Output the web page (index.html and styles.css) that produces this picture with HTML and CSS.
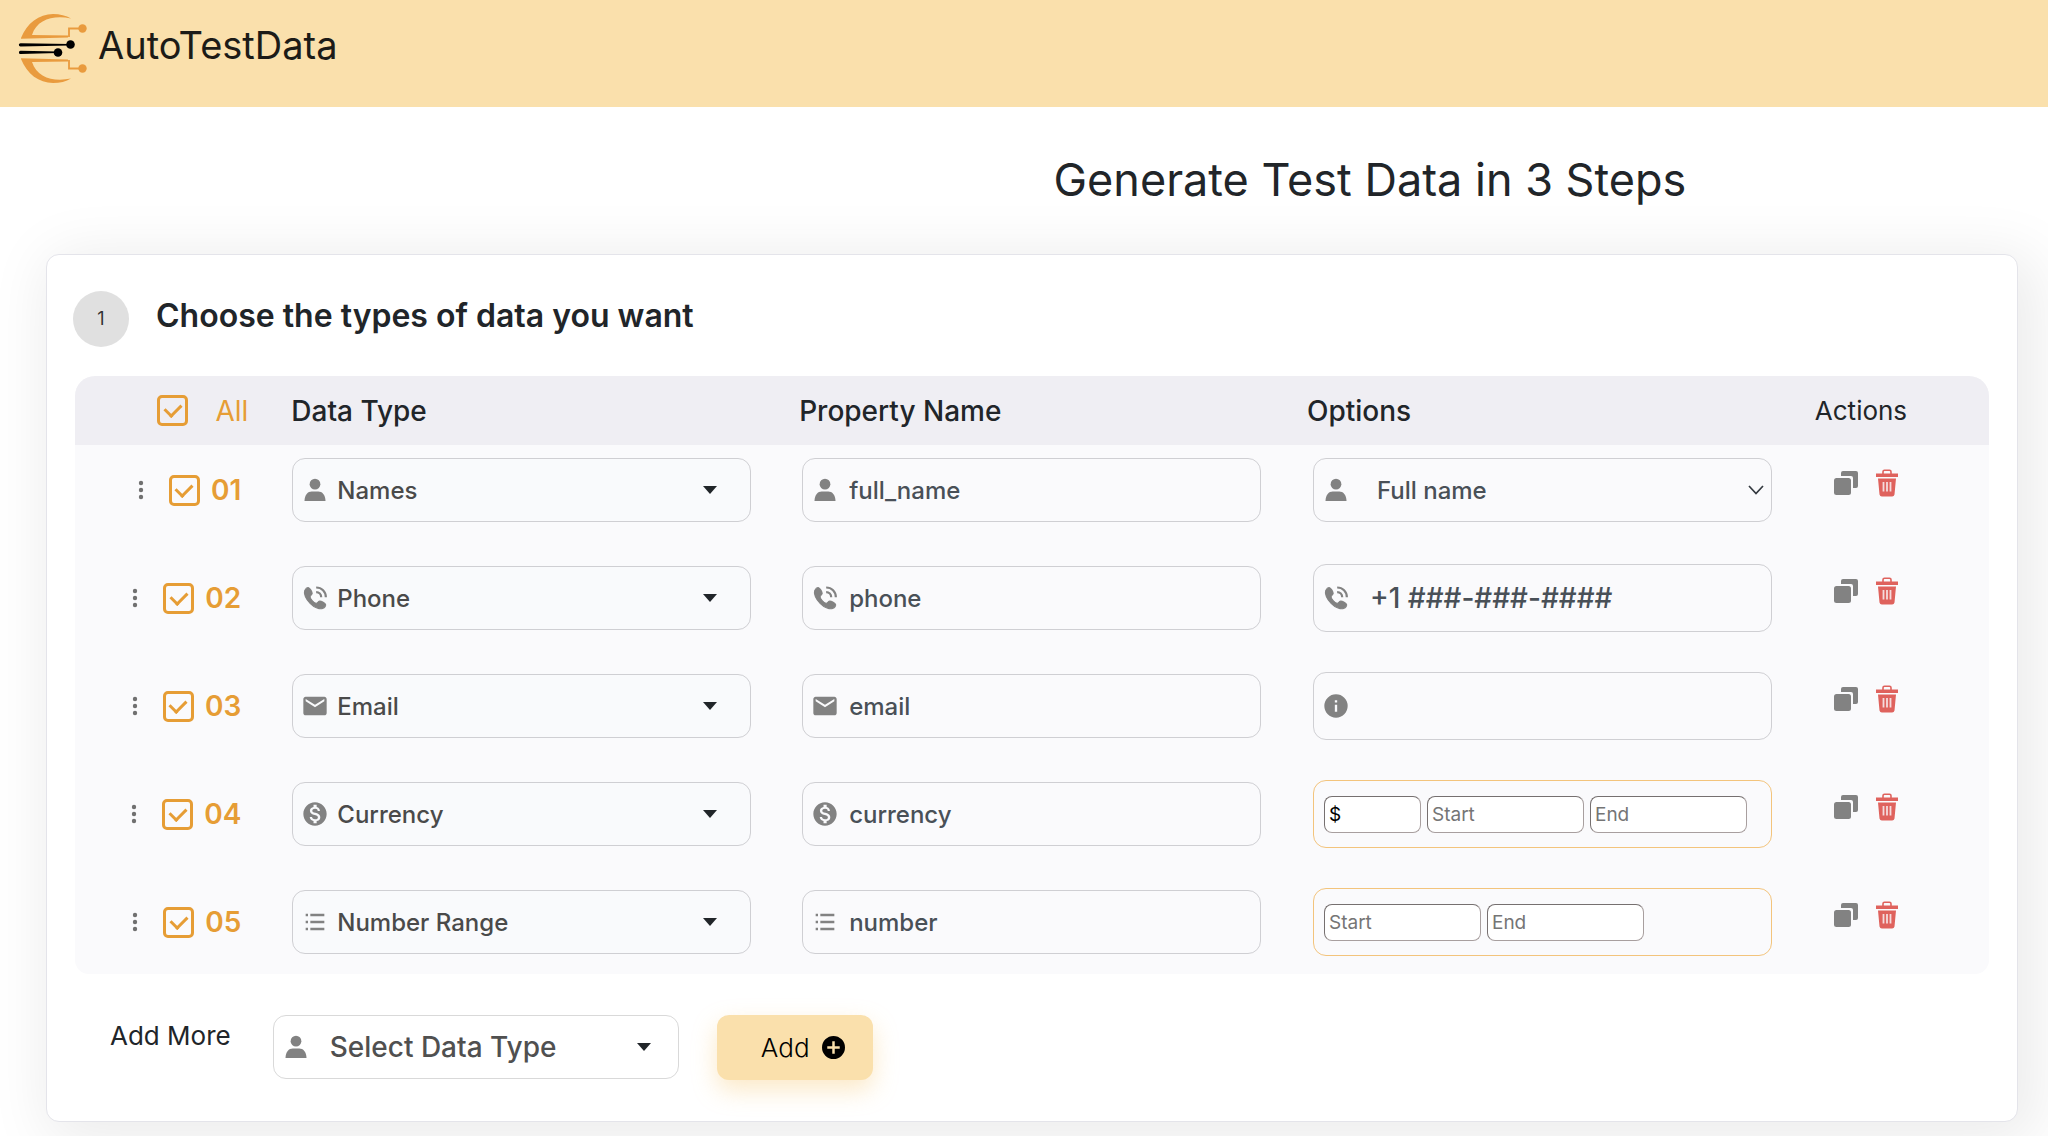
FILE: index.html
```html
<!DOCTYPE html>
<html lang="en">
<head>
    <meta charset="UTF-8">
    <meta name="viewport" content="width=device-width, initial-scale=1.0">
    <title>AutoTestData</title>
    <link rel="stylesheet" href="styles.css">
</head>
<body>
    <!-- shared icons -->
    <svg class="sprite" aria-hidden="true">
        <symbol id="person" viewBox="0 0 24 24"><ellipse cx="12" cy="7" rx="4.6" ry="4.6"/><path d="M3 21.500c0-5.500 3-8.300 6.200-8.300h5.600c3.200 0 6.200 2.800 6.200 8.300z"/></symbol>
        <symbol id="phone" viewBox="0 0 24 24">
            <path d="M3.200 5.600C4 4 5.600 2.800 6.600 3.200c1.200.5 2.900 3.400 3 4.800.1 1.200-1.900 2-1.800 3.200.2 1.700 3.300 5 5.200 5.300 1.200.2 1.900-1.900 3.100-1.900 1.500 0 4.500 1.800 5 3 .4 1-.8 2.600-2.300 3.300-2.400 1.200-7.500-.6-11-4.300C4.200 13 2 8.200 3.200 5.600z" stroke="currentColor" stroke-width="0.900"/>
            <path d="M13 3c4.700 0 8.300 3.600 8.300 8.300M13 7c2.500 0 4.300 1.800 4.300 4.300" fill="none" stroke="currentColor" stroke-width="1.900"/>
        </symbol>
        <symbol id="mail" viewBox="0 0 24 24"><path d="M20 4H4c-1.100 0-2 .9-2 2v12c0 1.100.9 2 2 2h16c1.100 0 2-.9 2-2V6c0-1.100-.9-2-2-2zm0 4l-8 5-8-5V6l8 5 8-5v2z"/></symbol>
        <symbol id="dollar" viewBox="0 0 24 24"><path d="M12 2C6.480 2 2 6.480 2 12s4.480 10 10 10 10-4.480 10-10S17.520 2 12 2zm1.410 16.090V20h-2.670v-1.930c-1.710-.36-3.160-1.460-3.270-3.400h1.960c.1 1.050.82 1.870 2.650 1.870 1.960 0 2.400-.98 2.400-1.590 0-.83-.44-1.610-2.670-2.140-2.480-.6-4.180-1.620-4.180-3.670 0-1.720 1.390-2.840 3.110-3.210V4h2.670v1.950c1.860.45 2.790 1.860 2.850 3.390H14.300c-.05-1.110-.64-1.870-2.220-1.870-1.500 0-2.400.68-2.400 1.640 0 .84.65 1.390 2.670 1.910s4.180 1.390 4.180 3.910c-.01 1.830-1.380 2.830-3.120 3.160z"/></symbol>
        <symbol id="list" viewBox="0 0 24 24"><path d="M4 5h2v2H4zM4 11h2v2H4zM4 17h2v2H4zM8 5h12v2H8zM8 11h12v2H8zM8 17h12v2H8z"/></symbol>
        <symbol id="info" viewBox="0 0 24 24"><path d="M12 2a10 10 0 1 0 0 20 10 10 0 0 0 0-20zm1 15h-2v-6h2v6zm0-8h-2V7h2v2z"/></symbol>
        <symbol id="copy" viewBox="0 0 24 24"><path d="M9 0h13a2 2 0 0 1 2 2v13a2 2 0 0 1-2 2h-3V7a2 2 0 0 0-2-2H7V2a2 2 0 0 1 2-2z"/><rect x="0" y="7" width="17" height="17" rx="2.500"/></symbol>
        <symbol id="trash" viewBox="0 0 22 28"><path d="M0 4.500h22V8H0zM2 9.500h18l-1.500 16a2.500 2.500 0 0 1-2.500 2H6a2.500 2.500 0 0 1-2.500-2z"/><path d="M7 5V2.800a1.500 1.500 0 0 1 1.500-1.500h5A1.500 1.500 0 0 1 15 2.800V5" fill="none" stroke="currentColor" stroke-width="1.600"/><path d="M7.500 13v9.500M11 13v9.500M14.500 13v9.500" stroke="#fafafc" stroke-opacity="0.800" stroke-width="1.800"/></symbol>
        <symbol id="dots" viewBox="0 0 6 20"><circle cx="3" cy="3" r="2.200"/><circle cx="3" cy="10" r="2.200"/><circle cx="3" cy="17" r="2.200"/></symbol>
        <symbol id="caret" viewBox="0 0 14 8"><path d="M0 0h14L7 8z"/></symbol>
        <symbol id="chevron" viewBox="0 0 16 10"><path d="M1 1l7 7.500L15 1" fill="none" stroke="currentColor" stroke-width="1.700"/></symbol>
        <symbol id="plus" viewBox="0 0 24 24"><path d="M12 0a12 12 0 1 0 0 24 12 12 0 0 0 0-24zm1.300 5.500v5.200h5.200v2.600h-5.200v5.200h-2.600v-5.200H5.500v-2.600h5.200V5.500z"/></symbol>
    </svg>

    <header class="navbar">
        <a class="brand" href="#">
            <svg class="logo" viewBox="0 0 70 70" aria-hidden="true">
                <g fill="#e99b3e">
                    <path d="M3 24C9 9 21 0 35 0c7 0 13 1.500 18 4.500C36 1 19 5 14 21l36 .5v2L3 24.800z"/>
                    <path d="M3 45c6 15 18 24 32 24 7 0 13-1.500 18-4.500C36 68 19 64 14 48l36-.5v-2L3 44.200z"/>
                    <circle cx="64.500" cy="14.500" r="4.200"/>
                    <circle cx="64.500" cy="54.500" r="4.200"/>
                </g>
                <path d="M51 23v-8.500h12M51 46v8.500h12" fill="none" stroke="#e99b3e" stroke-width="1.800"/>
                <path d="M2.500 29.200L52 30v1.500L2.500 32.500a1.600 1.600 0 0 1 0-3.300zM2.500 36.800L40 37.600v1.500L2.500 40a1.600 1.600 0 0 1 0-3.200z"/>
                <circle cx="52.500" cy="30.500" r="4.300"/>
                <circle cx="40" cy="38.500" r="4.300"/>
            </svg>
            <span>AutoTestData</span>
        </a>
    </header>

    <main>
        <h1 class="page-title">Generate Test Data in 3 Steps</h1>

        <section class="card">
            <div class="step">
                <span class="step-number">1</span>
                <h2>Choose the types of data you want</h2>
            </div>

            <table class="data-table">
                <thead>
                    <tr>
                        <th class="col-check"><label class="pick-all"><input type="checkbox" checked>All</label></th>
                        <th class="col-type">Data Type</th>
                        <th class="col-name">Property Name</th>
                        <th class="col-options">Options</th>
                        <th class="col-actions">Actions</th>
                    </tr>
                </thead>
                <tbody>
                    <tr>
                        <td><div class="pick"><svg class="dots"><use href="#dots"/></svg><input type="checkbox" id="row1" checked><label for="row1">01</label></div></td>
                        <td class="kind"><div class="cell"><div class="field type"><svg class="icon"><use href="#person"/></svg><select aria-label="Data type 1"><option>Names</option></select><svg class="caret"><use href="#caret"/></svg></div></div></td>
                        <td class="name"><div class="cell"><div class="field"><svg class="icon"><use href="#person"/></svg><input type="text" aria-label="Property name 1" value="full_name"></div></div></td>
                        <td class="options"><div class="cell"><div class="field pattern"><svg class="icon"><use href="#person"/></svg><select aria-label="Options 1"><option>Full name</option></select><svg class="chevron"><use href="#chevron"/></svg></div></div></td>
                        <td><div class="actions"><button aria-label="Copy"><svg class="copy"><use href="#copy"/></svg></button><button aria-label="Delete"><svg class="trash"><use href="#trash"/></svg></button></div></td>
                    </tr>
                    <tr>
                        <td><div class="pick"><svg class="dots"><use href="#dots"/></svg><input type="checkbox" id="row2" checked><label for="row2">02</label></div></td>
                        <td class="kind"><div class="cell"><div class="field type"><svg class="icon"><use href="#phone"/></svg><select aria-label="Data type 2"><option>Phone</option></select><svg class="caret"><use href="#caret"/></svg></div></div></td>
                        <td class="name"><div class="cell"><div class="field"><svg class="icon"><use href="#phone"/></svg><input type="text" aria-label="Property name 2" value="phone"></div></div></td>
                        <td class="options"><div class="cell"><div class="field pattern tall"><svg class="icon"><use href="#phone"/></svg><input type="text" aria-label="Options 2" value="+1 ###-###-####"></div></div></td>
                        <td><div class="actions"><button aria-label="Copy"><svg class="copy"><use href="#copy"/></svg></button><button aria-label="Delete"><svg class="trash"><use href="#trash"/></svg></button></div></td>
                    </tr>
                    <tr>
                        <td><div class="pick"><svg class="dots"><use href="#dots"/></svg><input type="checkbox" id="row3" checked><label for="row3">03</label></div></td>
                        <td class="kind"><div class="cell"><div class="field type"><svg class="icon"><use href="#mail"/></svg><select aria-label="Data type 3"><option>Email</option></select><svg class="caret"><use href="#caret"/></svg></div></div></td>
                        <td class="name"><div class="cell"><div class="field"><svg class="icon"><use href="#mail"/></svg><input type="text" aria-label="Property name 3" value="email"></div></div></td>
                        <td class="options"><div class="cell"><div class="field pattern tall"><svg class="icon"><use href="#info"/></svg><input type="text" aria-label="Options 3"></div></div></td>
                        <td><div class="actions"><button aria-label="Copy"><svg class="copy"><use href="#copy"/></svg></button><button aria-label="Delete"><svg class="trash"><use href="#trash"/></svg></button></div></td>
                    </tr>
                    <tr>
                        <td><div class="pick"><svg class="dots"><use href="#dots"/></svg><input type="checkbox" id="row4" checked><label for="row4">04</label></div></td>
                        <td class="kind"><div class="cell"><div class="field type"><svg class="icon"><use href="#dollar"/></svg><select aria-label="Data type 4"><option>Currency</option></select><svg class="caret"><use href="#caret"/></svg></div></div></td>
                        <td class="name"><div class="cell"><div class="field"><svg class="icon"><use href="#dollar"/></svg><input type="text" aria-label="Property name 4" value="currency"></div></div></td>
                        <td class="options"><div class="cell"><div class="field tall range"><input class="symbol" type="text" aria-label="Currency symbol" value="$"><input type="text" aria-label="Currency start" placeholder="Start"><input type="text" aria-label="Currency end" placeholder="End"></div></div></td>
                        <td><div class="actions"><button aria-label="Copy"><svg class="copy"><use href="#copy"/></svg></button><button aria-label="Delete"><svg class="trash"><use href="#trash"/></svg></button></div></td>
                    </tr>
                    <tr>
                        <td><div class="pick"><svg class="dots"><use href="#dots"/></svg><input type="checkbox" id="row5" checked><label for="row5">05</label></div></td>
                        <td class="kind"><div class="cell"><div class="field type"><svg class="icon"><use href="#list"/></svg><select aria-label="Data type 5"><option>Number Range</option></select><svg class="caret"><use href="#caret"/></svg></div></div></td>
                        <td class="name"><div class="cell"><div class="field"><svg class="icon"><use href="#list"/></svg><input type="text" aria-label="Property name 5" value="number"></div></div></td>
                        <td class="options"><div class="cell"><div class="field tall range"><input type="text" aria-label="Range start" placeholder="Start"><input type="text" aria-label="Range end" placeholder="End"></div></div></td>
                        <td><div class="actions"><button aria-label="Copy"><svg class="copy"><use href="#copy"/></svg></button><button aria-label="Delete"><svg class="trash"><use href="#trash"/></svg></button></div></td>
                    </tr>
                </tbody>
            </table>

            <div class="add-more">
                <label for="new-type">Add More</label>
                <div class="field new-type"><svg class="icon"><use href="#person"/></svg><select id="new-type"><option>Select Data Type</option></select><svg class="caret"><use href="#caret"/></svg></div>
                <button class="add">Add<svg><use href="#plus"/></svg></button>
            </div>
        </section>
    </main>
</body>
</html>
```

FILE: styles.css
```css
* {
    margin: 0;
    padding: 0;
    box-sizing: border-box;
}

body {
    font-family: "Inter", "Liberation Sans", sans-serif;
    font-size: 28px;
    color: #212529;
    background: #fff;
    overflow-x: hidden;
}

input,
select,
button {
    font: inherit;
    color: inherit;
    border: none;
    background: none;
    outline: none;
}

button,
select {
    cursor: pointer;
}

svg {
    fill: currentColor;
    flex-shrink: 0;
}

.sprite {
    display: none;
}

.navbar {
    background: #fae0ac;
    height: 107px;
    padding: 14px 18px;
}

.brand {
    display: inline-flex;
    gap: 10px;
    color: #1c1b17;
    font-size: 38px;
    line-height: 62px;
    text-decoration: none;
}

.logo {
    width: 70px;
    height: 70px;
    fill: #000;
}

.page-title {
    margin-left: 33%;
    padding: 43px 0 44px 16px;
    font-size: 45px;
    font-weight: 400;
    line-height: 60px;
    text-align: center;
}

.card {
    margin: 0 30px 14px 46px;
    padding: 36px 28px 41px 26px;
    background: #fff;
    border: 1px solid #e4e4ea;
    border-radius: 13px;
    box-shadow: 10px 10px 60px 10px rgba(0, 0, 0, 0.08);
}

.step {
    display: flex;
    gap: 27px;
    margin-bottom: 29px;
}

.step-number {
    width: 56px;
    height: 56px;
    border-radius: 50%;
    background: #e0e0e0;
    color: #333;
    font-size: 18px;
    line-height: 56px;
    text-align: center;
}

.step h2 {
    font-size: 32px;
    font-weight: 600;
    line-height: 50px;
}

.data-table {
    width: calc(100% - 2px);
    margin-left: 2px;
    table-layout: fixed;
    border-collapse: separate;
    border-spacing: 0;
    border-radius: 20px 20px 14px 14px;
    background: #fafafc;
    overflow: hidden;
}

.data-table th {
    height: 69px;
    background: #efeef3;
    font-weight: 500;
    text-align: left;
}

.data-table td {
    padding: 11px 0 29px;
    vertical-align: top;
}

.data-table tr:last-child td {
    padding-bottom: 18px;
}

.data-table .kind {
    padding-left: 1px;
}

.data-table .name {
    padding-left: 3px;
}

.data-table .options {
    padding-left: 6px;
}

.col-check {
    width: 11.3%;
}

.data-table .col-actions {
    width: 9.1%;
    font-size: 26px;
    font-weight: 400;
}

.pick,
.pick-all {
    display: flex;
    justify-content: flex-end;
    align-items: center;
    color: #e69d35;
}

.pick-all {
    gap: 27px;
    padding-right: 43px;
    font-weight: 400;
}

.pick {
    gap: 11px;
    height: 68px;
    padding-right: 50px;
    font-weight: 600;
}

.dots {
    width: 6px;
    height: 20px;
    margin-right: 14px;
    color: #707070;
}

input[type="checkbox"] {
    appearance: none;
    display: grid;
    place-items: center;
    width: 31px;
    height: 31px;
    border: 3px solid #e69d35;
    border-radius: 5px;
}

input[type="checkbox"]:checked::after {
    content: "";
    width: 13px;
    height: 8px;
    margin-bottom: 4px;
    border: solid #e69d35;
    border-width: 0 0 3px 3px;
    transform: rotate(-45deg);
}

.cell {
    display: flex;
    align-items: center;
    height: 68px;
}

.field {
    position: relative;
    display: flex;
    align-items: center;
    width: 459px;
    height: 64px;
    border: 1px solid #cfcfd3;
    border-radius: 13px;
    color: #495057;
    font-size: 24px;
    font-weight: 500;
}

.field.tall {
    height: 68px;
}

.field .icon {
    width: 28px;
    height: 28px;
    margin-left: 8px;
    color: #828282;
}

.field > input,
.field > select {
    flex: 1;
    min-width: 0;
    height: 100%;
    padding-left: 10px;
    appearance: none;
}

.type {
    background: #f9fafc;
    color: #4a4a4a;
}

.type > select {
    padding-left: 8px;
}

.caret {
    position: absolute;
    right: 33px;
    width: 14px;
    height: 8px;
    color: #212529;
    pointer-events: none;
}

.chevron {
    position: absolute;
    right: 7px;
    width: 16px;
    height: 10px;
    color: #343a40;
    pointer-events: none;
}

.pattern > select {
    padding-left: 27px;
}

.pattern > input {
    padding-left: 20px;
    font-size: 28px;
}

.range {
    gap: 6px;
    padding-left: 10px;
    border-color: #f3c47c;
}

.range > input {
    flex: none;
    width: 157px;
    height: 37px;
    padding: 0 4px;
    border: 1px solid;
    border-color: #767070 #a89f9f #a89f9f #767070;
    border-radius: 8px;
    background: #fff;
    color: #000;
    font-size: 19px;
    font-weight: 400;
}

.range > .symbol {
    width: 97px;
}

.range > input::placeholder {
    color: #757575;
}

.actions {
    display: flex;
    align-items: center;
    gap: 18px;
    height: 68px;
    padding: 0 0 14px 19px;
}

.actions button {
    display: flex;
}

.copy {
    width: 24px;
    height: 24px;
    color: #828282;
}

.trash {
    width: 22px;
    height: 28px;
    color: #df625d;
}

.add-more {
    display: flex;
    align-items: flex-start;
    padding: 41px 0 0 37px;
}

.add-more label {
    font-size: 26px;
    line-height: 42px;
}

.new-type {
    width: 406px;
    height: 64px;
    margin: 0 38px 0 42px;
    border-color: #d9d9d9;
    color: #505050;
    font-size: 28px;
}

.new-type > select {
    padding-left: 20px;
}

.new-type .caret {
    right: 27px;
}

.add {
    display: flex;
    justify-content: center;
    align-items: center;
    gap: 12px;
    width: 156px;
    height: 65px;
    padding-left: 16px;
    border-radius: 12px;
    background: #fae0ac;
    color: #000;
    font-size: 26px;
    font-weight: 300;
    box-shadow: 0 10px 24px rgba(247, 201, 115, 0.4);
}

.add svg {
    width: 23px;
    height: 23px;
}
```
